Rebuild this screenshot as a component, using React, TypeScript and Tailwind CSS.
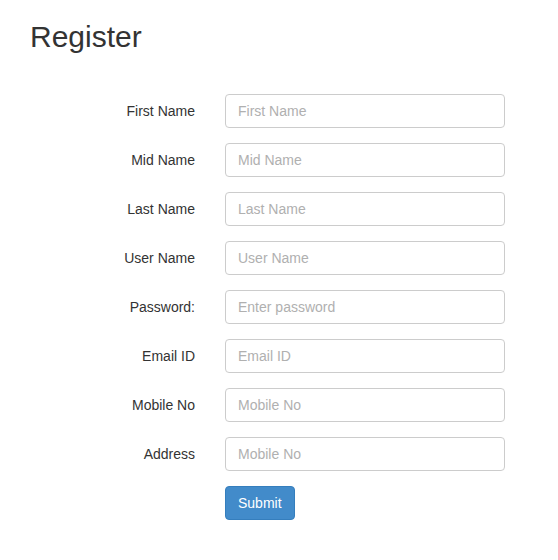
const fields = [
  { label: "First Name", placeholder: "First Name" },
  { label: "Mid Name", placeholder: "Mid Name" },
  { label: "Last Name", placeholder: "Last Name" },
  { label: "User Name", placeholder: "User Name" },
  { label: "Password:", placeholder: "Enter password", type: "password" },
  { label: "Email ID", placeholder: "Email ID" },
  { label: "Mobile No", placeholder: "Mobile No" },
  { label: "Address", placeholder: "Mobile No" },
];

export default function App() {
  return (
    <div className="min-h-[560px] bg-white px-[30px] pt-[20px] font-['Liberation_Sans',Arial,sans-serif] text-[14px] text-[#333]">
      <h2 className="text-[30px] leading-[33px] font-normal">Register</h2>
      <form className="mt-[41px] flex flex-col gap-[15px]">
        {fields.map((f) => (
          <div key={f.label} className="flex items-center">
            <label className="w-[165px] text-right">{f.label}</label>
            <input
              type={f.type ?? "text"}
              placeholder={f.placeholder}
              className="ml-[30px] h-[34px] w-[280px] rounded-[4px] border border-[#ccc] px-[12px] text-[14px] text-[#555] placeholder:text-[#b0b0b0] outline-none"
            />
          </div>
        ))}
        <div className="pl-[195px]">
          <button
            type="button"
            className="h-[34px] rounded-[4px] border border-[#357ebd] bg-[#428bca] px-[12px] text-[14px] text-white"
          >
            Submit
          </button>
        </div>
      </form>
    </div>
  );
}
